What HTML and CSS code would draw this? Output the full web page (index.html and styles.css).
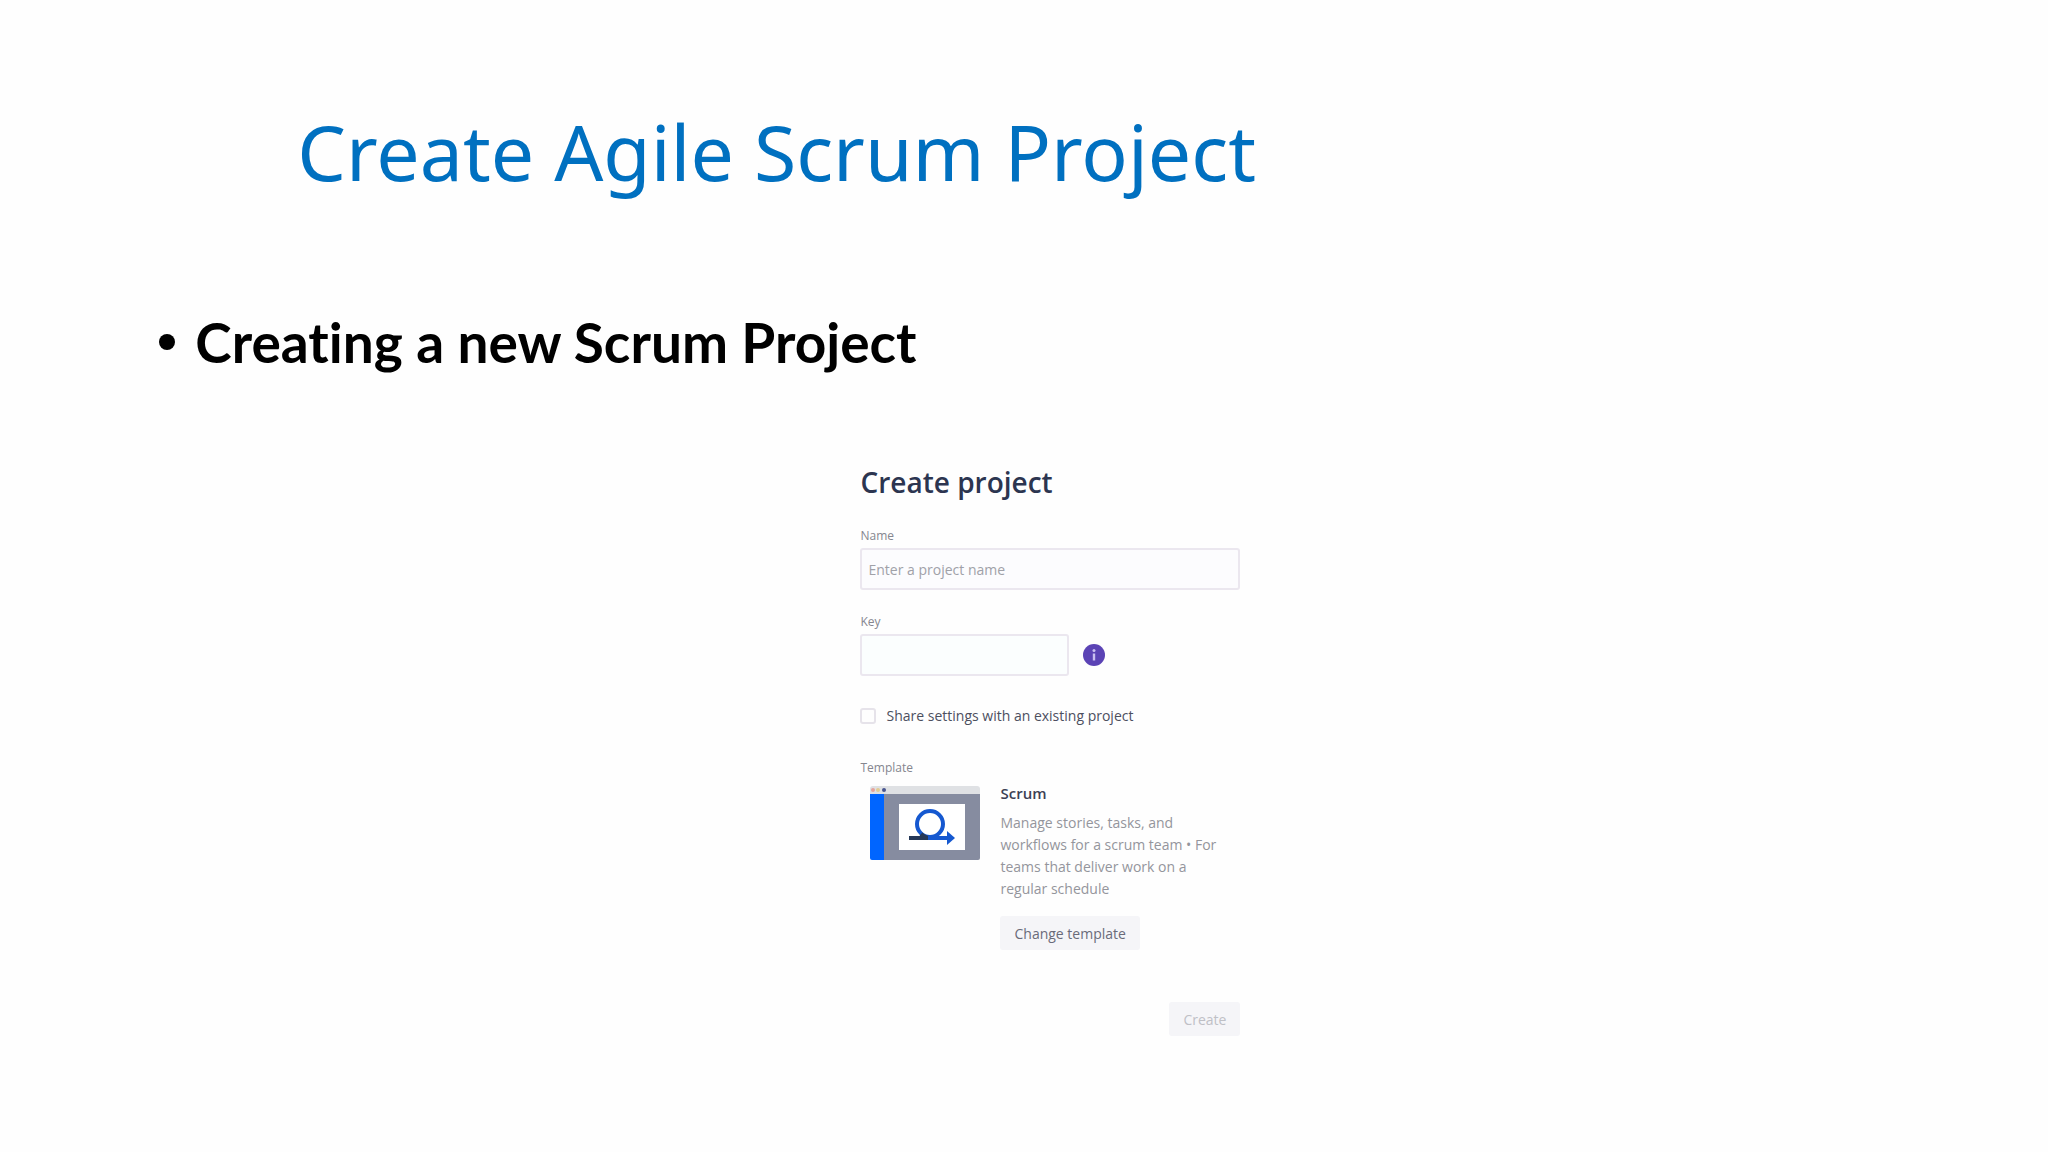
FILE: index.html
```
<!DOCTYPE html>
<html lang="en">
  <head>
    <meta charset="UTF-8" />
    <meta name="viewport" content="width=device-width, initial-scale=1.0" />
    <title>Create Agile Scrum Project</title>
    <link rel="stylesheet" href="styles.css">
  </head>
  <body>
    <main class="slide">
      <h1>Create Agile Scrum Project</h1>
      <ul class="points">
        <li>Creating a new Scrum Project</li>
      </ul>
      <form class="project" action="">
        <h2>Create project</h2>
        <label class="caption" for="name">Name</label>
        <input class="field" type="text" id="name" name="name" placeholder="Enter a project name" />
        <label class="caption" for="key">Key</label>
        <div class="key-row">
          <input class="field" type="text" id="key" name="key" />
          <button type="button" class="info" aria-label="About the key">
            <svg viewBox="0 0 22 22">
              <circle cx="11" cy="11" r="11" fill="#5b43b5" />
              <circle cx="11" cy="6.5" r="1.5" fill="#c9bff0" />
              <path d="M11 9.5v7" stroke="#c9bff0" stroke-width="2.4" />
            </svg>
          </button>
        </div>
        <div class="share">
          <input type="checkbox" id="share" name="share" />
          <label for="share">Share settings with an existing project</label>
        </div>
        <div class="caption">Template</div>
        <div class="template">
          <svg class="preview" viewBox="0 0 110 74">
            <path d="M3 0h104q3 0 3 3v5H0V3q0-3 3-3z" fill="#dfe1e4" />
            <circle cx="3" cy="4" r="2" fill="#e5a29b" />
            <circle cx="8" cy="4" r="2" fill="#e2cc93" />
            <circle cx="14" cy="4" r="2" fill="#4a568f" />
            <path d="M14 8h96v64q0 2-2 2H14z" fill="#868ca0" />
            <path d="M0 8h14v66H2q-2 0-2-2z" fill="#0065ff" />
            <path d="M29 18h66v46H29z" fill="#fff" />
            <path d="M39 52h19" stroke="#253858" stroke-width="4" />
            <circle cx="60" cy="38" r="13" fill="none" stroke="#1558d0" stroke-width="4" />
            <path d="M51 48q4 4 9 4" fill="none" stroke="#253858" stroke-width="4" />
            <path d="M58 52h20" stroke="#1558d0" stroke-width="4" />
            <path d="M77 45l8 7-8 7z" fill="#1558d0" />
          </svg>
          <div class="about">
            <h3>Scrum</h3>
            <p>Manage stories, tasks, and workflows for a scrum team • For teams that deliver work on a regular schedule</p>
            <button type="button">Change template</button>
          </div>
        </div>
        <button class="create" disabled>Create</button>
      </form>
    </main>
  </body>
</html>
```
FILE: styles.css
```
* {
  padding: 0;
  margin: 0;
  box-sizing: border-box;
}
body {
  background: #fefefe;
  font-family: "Open Sans", "Noto Sans", sans-serif;
}
.slide {
  padding: 96px 7%;
}
h1 {
  padding-left: 154px;
  font-family: "Noto Sans", sans-serif;
  font-size: 77px;
  line-height: 112px;
  font-weight: 400;
  color: #0070c0;
}
.points {
  margin-top: 98px;
  padding-left: 16px;
  list-style: none;
  font-family: Lato, sans-serif;
  font-size: 55px;
  line-height: 72px;
  font-weight: 700;
  font-variant-ligatures: none;
  color: #000;
}
.points li {
  display: flex;
  align-items: center;
  gap: 20px;
}
.points li::before {
  content: "";
  width: 16px;
  height: 16px;
  border-radius: 50%;
  background: #000;
}
.project {
  width: 380px;
  margin-top: 84px;
  margin-left: 41%;
  margin-left: calc(41% - 5px);
  font-size: 14px;
  color: #4c4f5e;
}
h2 {
  font-size: 28px;
  line-height: 40px;
  font-weight: 600;
  color: #2c3550;
  margin-bottom: 26px;
}
.caption {
  display: block;
  font-size: 12px;
  line-height: 16px;
  color: #85868f;
  margin-bottom: 4px;
}
.field {
  display: block;
  width: 100%;
  height: 42px;
  padding: 0 6px;
  border: 2px solid #ebe7ef;
  border-radius: 3px;
  background: #fcfcfe;
  font: inherit;
  margin-bottom: 24px;
}
.field::placeholder {
  color: #a0a1a8;
}
.key-row {
  display: flex;
  gap: 14px;
  margin-bottom: 28px;
}
.key-row .field {
  width: 55%;
  margin: 0;
  background: #fbfefe;
}
.info {
  width: 22px;
  border: none;
  background: none;
}
.info svg {
  display: block;
}
.share {
  display: flex;
  align-items: center;
  gap: 10px;
  line-height: 24px;
  margin-bottom: 32px;
}
.share input {
  appearance: none;
  width: 16px;
  height: 16px;
  border: 2px solid #e6e3ea;
  border-radius: 3px;
}
.template {
  display: flex;
  align-items: flex-start;
  gap: 20px;
  padding: 6px 10px 0;
}
.preview {
  flex: none;
  width: 110px;
}
.about {
  flex: 1;
}
h3 {
  font-size: 15px;
  line-height: 14px;
  font-weight: 600;
  color: #3c4054;
  margin-bottom: 12px;
}
.about p {
  line-height: 22px;
  color: #94959c;
  margin-bottom: 16px;
}
.project button {
  font-family: inherit;
}
.about button,
.create {
  height: 34px;
  padding: 0 14px;
  border: none;
  border-radius: 3px;
  background: #f5f5f8;
  font-size: 14px;
  color: #6a6b7a;
}
.create {
  display: block;
  margin: 52px 0 0 auto;
  color: #bfc0c6;
}
```
